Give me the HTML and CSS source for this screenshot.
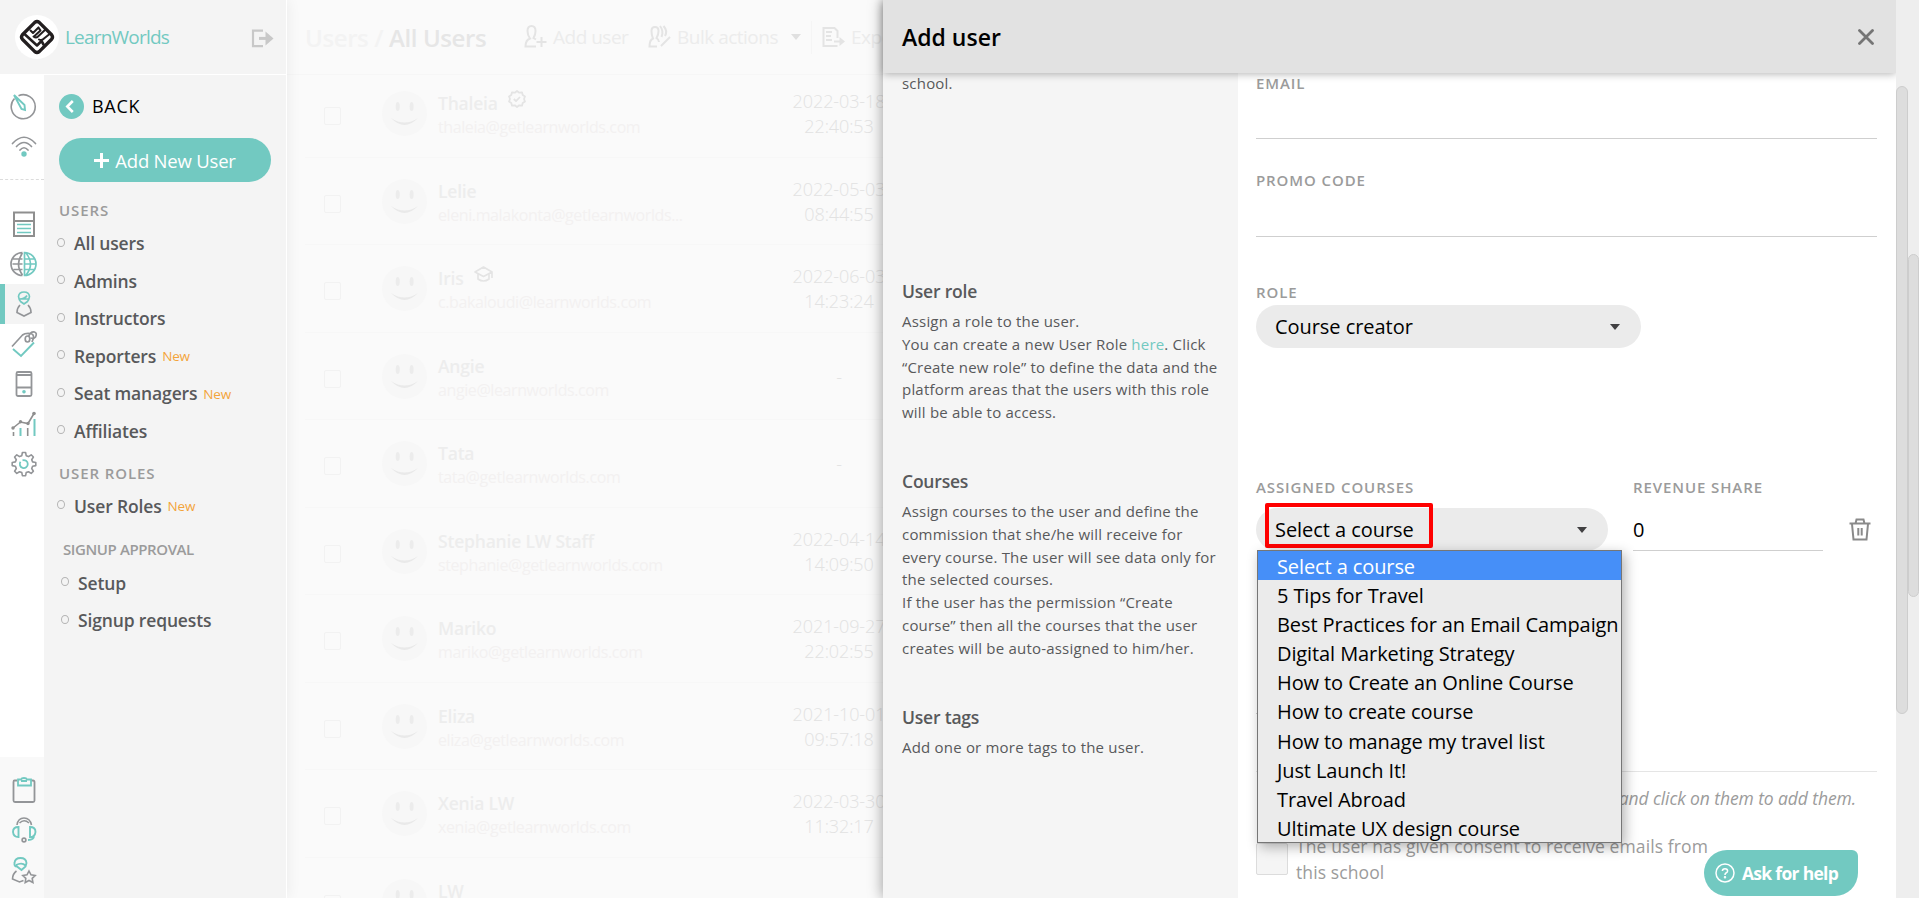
FILE: index.html
```html
<!DOCTYPE html>
<html lang="en">
<head>
    <meta charset="UTF-8">
    <meta name="viewport" content="width=device-width, initial-scale=1.0">
    <title>LearnWorlds - All Users</title>
    <link rel="stylesheet" href="styles.css">
</head>
<body>
    <!-- Shared icons -->
    <svg class="sprite" width="0" height="0">
        <symbol id="face" viewBox="0 0 45 45">
            <circle cx="22.5" cy="22.5" r="22.5" fill="#f7f7f7"/>
            <ellipse cx="15.7" cy="15.5" rx="2" ry="4.6" fill="#ececec"/>
            <ellipse cx="29.6" cy="15.5" rx="2" ry="4.6" fill="#ececec"/>
            <path d="M9 27 Q22.5 41 36 27 Q22.5 36 9 27Z" fill="#e9e9e9"/>
        </symbol>
    </svg>

    <div class="app">
        <aside class="sidebar">
            <div class="brand">
                <span class="logo">
                    <svg width="36" height="36" viewBox="0 0 36 36" fill="none" stroke="#231f20" stroke-width="3.4" stroke-linejoin="round" stroke-linecap="round">
                        <path d="M15.8 3.400 Q18 1.600 20.200 3.400 L32.600 15.800 Q34.400 18 32.600 20.200 L20.200 32.600 Q18 34.400 15.800 32.600 L3.400 20.200 Q1.600 18 3.400 15.800Z"/>
                        <path d="M6 15.500 L18 26.500 L22.500 22 L24.500 25.500" stroke-width="2.600"/>
                        <path d="M11.500 11.500 L14 14 L19.500 8.500 M14.500 17.500 Q17 19.500 19 17.500 L26.500 10.500 M20 20.500 Q22.500 22 25 19.500 L30 15.500 M19.500 8.500 L21.500 11.500 L15.500 17" stroke-width="2"/>
                    </svg>
                </span>
                <span class="brand-name">LearnWorlds</span>
                <svg class="exit" width="23" height="19" viewBox="0 0 23 19" fill="none" stroke="#c8c8c8" stroke-width="2.2">
                    <path d="M12 1.6H2v15.6h10"/>
                    <path d="M8 9.4h9" stroke-width="3"/>
                    <path d="M14.5 2.5 22.5 9.4 14.5 16.5Z" fill="#c8c8c8" stroke="none"/>
                </svg>
            </div>

            <div class="sidebar-body">
                <nav class="rail">
                    <div class="rail-top">
                        <a><svg width="28" height="28" viewBox="0 0 28 28" fill="none" stroke="#939598" stroke-width="1.6">
                            <path d="M4.500 6.500 A12 12 0 1 0 8.500 3.700"/>
                            <path d="M4 3 L14.500 13 L15 18 L11.500 17 L4 3" stroke="#72c9c1" stroke-width="1.900"/>
                        </svg></a>
                        <a><svg width="28" height="28" viewBox="0 0 28 28" fill="none" stroke="#939598" stroke-width="1.7" stroke-linecap="round">
                            <path d="M2.5 11.5 Q14 -1 25.5 11.5 M6.5 14.5 Q14 6.5 21.5 14.5 M10 18 Q14 13.5 18 18"/>
                            <circle cx="14" cy="22" r="2.7" fill="#72c9c1" stroke="none"/>
                        </svg></a>
                    </div>
                    <div class="rail-main">
                        <a><svg width="28" height="28" viewBox="0 0 28 28" fill="none" stroke="#8f8f8f" stroke-width="2">
                            <path d="M4 2.5h20v23.5h-20z M4 11h20"/>
                            <path d="M7 14.5h14 M7 18.5h14 M7 22.5h14" stroke="#72c9c1" stroke-width="1.6"/>
                        </svg></a>
                        <a><svg width="28" height="28" viewBox="0 0 28 28" fill="none" stroke="#939598" stroke-width="1.7">
                            <path d="M12.5 2.5 A11.5 11.5 0 0 0 12.5 25.5 M12.5 3 Q4.5 14 12.5 25 M3 9h9.5 M2.5 14h10 M3.5 19.5h9"/>
                            <path d="M14.5 2.5 A11.5 11.5 0 0 1 14.5 25.5Z M16 3 Q25 14 16 25 M15 9h10 M15 14h11 M15 19.5h10" stroke="#72c9c1"/>
                        </svg></a>
                        <a class="active"><svg width="28" height="28" viewBox="0 0 28 28" fill="none" stroke="#939598" stroke-width="1.7">
                            <path d="M10 15 Q7 18 7 22.5 L14 26 L21 22.5 Q21 18 18 15"/>
                            <path d="M8.5 6.5 Q9 2 14 2 Q19 2 19.5 6.5 Q19 10 17.5 11.5 L14 14 L10.5 11.5 Q9 10 8.5 6.5Z M9.5 9 Q15 9 17 5.5 M11 9h7.5" stroke="#72c9c1"/>
                        </svg></a>
                        <a><svg width="28" height="28" viewBox="0 0 28 28" fill="none" stroke="#939598" stroke-width="1.7">
                            <path d="M2 16.5 L12.5 5 Q15 3 20 3.5 Q24 4 23.5 8 L22 12"/>
                            <ellipse cx="17.5" cy="9" rx="2.3" ry="3"/><path d="M18.5 7 Q20 1.5 24.5 2 Q27.5 3 25.5 7 Q24 9 20.5 8"/>
                            <path d="M3 19 L11 26 L24 12.5" stroke="#72c9c1" stroke-width="1.9"/>
                        </svg></a>
                        <a><svg width="28" height="28" viewBox="0 0 28 28" fill="none" stroke="#939598" stroke-width="1.8">
                            <rect x="6.5" y="2" width="15" height="24" rx="1.5"/><path d="M6.5 5h15 M6.5 17.5h15"/>
                            <circle cx="14" cy="21.7" r="1.8" fill="#72c9c1" stroke="none"/>
                        </svg></a>
                        <a><svg width="28" height="28" viewBox="0 0 28 28" fill="none" stroke="#8f8f8f" stroke-width="1.6">
                            <path d="M3 18 L10.5 12 L18 13.5 L24 3.5 M3.5 22v4 M17.7 18v8"/>
                            <path d="M10.5 18v8 M24.5 9v17" stroke="#72c9c1" stroke-width="2"/>
                            <g fill="#8f8f8f" stroke="none"><circle cx="3" cy="18" r="1.7"/><circle cx="10.5" cy="11.7" r="1.7"/><circle cx="18" cy="13.5" r="1.7"/><circle cx="24" cy="3.5" r="1.8"/></g>
                        </svg></a>
                        <a><svg width="28" height="28" viewBox="0 0 28 28" fill="none" stroke="#939598" stroke-width="1.6" stroke-linejoin="round">
                            <path d="M12.4 2.500h3.200l.6 3.200 2.300.9 2.700-1.800 2.200 2.200-1.700 2.700.9 2.200 3.200.6v3.100l-3.200.6-.9 2.300 1.700 2.700-2.200 2.200-2.700-1.700-2.300.9-.6 3.100h-3.200l-.6-3.100-2.300-.9-2.700 1.700-2.200-2.200 1.700-2.700-.9-2.300-3.200-.6v-3.100l3.200-.6.9-2.200-1.700-2.700 2.200-2.200 2.700 1.800 2.300-.9z"/>
                            <path d="M10.5 11.8 A4 4 0 1 0 12.5 10.3" stroke="#72c9c1" stroke-width="1.8"/>
                        </svg></a>
                    </div>
                    <div class="rail-bottom">
                        <a><svg width="28" height="28" viewBox="0 0 28 28" fill="none" stroke="#939598" stroke-width="1.8">
                            <path d="M7 4.5H4.5Q3.5 4.5 3.5 6v18.5Q3.5 26 5 26h18q1.500 0 1.500-1.500V6q0-1.500-1.500-1.500h-2"/>
                            <path d="M8 3.500h3q.5-1.500 3-1.500t3 1.500h4v6h-13z M11 5h6" stroke="#72c9c1"/>
                        </svg></a>
                        <a><svg width="28" height="28" viewBox="0 0 28 28" fill="none" stroke="#939598" stroke-width="1.6">
                            <path d="M7 9 Q8 2 14 2 Q20 2 21.5 9 M9.5 7 Q14 2.5 19 7"/><circle cx="14" cy="24" r="1.9"/>
                            <path d="M8.5 11 Q3 11 3 16 Q3.5 21 8.5 21Z M20 11 Q25.5 11 25.5 16 Q25 21 20 21Z M24 19.5 Q24 24 18 24" stroke="#72c9c1" stroke-width="1.9"/>
                        </svg></a>
                        <a><svg width="28" height="28" viewBox="0 0 28 28" fill="none" stroke="#939598" stroke-width="1.6">
                            <path d="M6.5 15 Q2.5 18 2.5 23 L9.5 26 L13.5 24.5"/><path d="M19 15l2 3.800 4.200.7-3 2.900.7 4.100-3.900-2-3.800 2 .6-4.100-3-2.900 4.200-.7z"/>
                            <path d="M4.5 7 Q5 2 10.5 2 Q16 2 16.5 7 L15.5 10.5 L11.5 14 L7 10.5 Q4 10.5 4.5 7Z M6 9 Q12 6 15.5 9.5" stroke="#72c9c1" stroke-width="1.9"/>
                        </svg></a>
                    </div>
                </nav>

                <div class="menu-panel">
                    <a class="back">
                        <span class="back-icon"><svg width="25" height="25" viewBox="0 0 25 25" fill="none" stroke="#fff" stroke-width="2.6"><path d="M13.8 7 8.3 12.5 13.8 18"/></svg></span>
                        BACK
                    </a>
                    <a class="add-btn">
                        <svg width="15" height="15" viewBox="0 0 15 15" stroke="#fff" stroke-width="3"><path d="M7.5 0v15M0 7.5h15"/></svg>
                        <span>Add New User</span>
                    </a>
                    <h4>USERS</h4>
                    <ul>
                        <li>All users</li>
                        <li>Admins</li>
                        <li>Instructors</li>
                        <li>Reporters <em>New</em></li>
                        <li>Seat managers <em>New</em></li>
                        <li>Affiliates</li>
                    </ul>
                    <h4>USER ROLES</h4>
                    <ul>
                        <li>User Roles <em>New</em></li>
                    </ul>
                    <div class="signup">
                        <h4>SIGNUP APPROVAL</h4>
                        <ul>
                            <li>Setup</li>
                            <li>Signup requests</li>
                        </ul>
                    </div>
                </div>
            </div>
        </aside>

        <main class="content">
            <header class="toolbar">
                <div class="crumbs"><span>Users /</span> All Users</div>
                <a class="tool tool-add">
                    <svg width="23" height="26" viewBox="0 0 23 26" fill="none" stroke="#e4e4e4" stroke-width="2"><path d="M12 22.5H1.5Q1.5 16 6 14.5 Q3.5 11 3.5 7 Q3.5 2 7.5 2 Q11.5 2 11.5 7 Q11.5 11 9.5 14 L12 15.5 M17.5 13v10 M12.5 18h10"/></svg>
                    <span>Add user</span>
                </a>
                <a class="tool tool-bulk">
                    <svg width="23" height="26" viewBox="0 0 23 26" fill="none" stroke="#e4e4e4" stroke-width="2"><path d="M9 22.5H1.5Q1.5 16 5 14.5 Q3.5 11 3.5 7 Q3.5 3 7 3 Q10.5 3 10.5 7 Q10.5 11 8.5 14 Q11 15.5 11 18 M12 2 Q16 7 13.5 13 M15.5 2 Q20 7 17 12 M13 22 L22 13"/></svg>
                    <span>Bulk actions</span>
                    <i class="caret"></i>
                </a>
                <a class="tool tool-export">
                    <svg width="23" height="22" viewBox="0 0 23 22" fill="none" stroke="#e4e4e4" stroke-width="2"><path d="M15.5 12V5l-3-3H1.5v18h14 M4 6h6 M4 10h5 M4 14h6 M12 15.5h7"/><path d="M17.5 11 23 15.5 17.5 20Z" fill="#e4e4e4" stroke="none"/></svg>
                    <span>Export</span>
                </a>
            </header>

            <div class="user-list">
                <div class="user-row">
                    <i class="check"></i>
                    <svg class="avatar"><use href="#face"/></svg>
                    <div class="who"><b>Thaleia <svg width="18" height="18" viewBox="0 0 18 18" fill="none" stroke="#e4e4e4" stroke-width="1.8" stroke-linejoin="round"><path d="M9 1l2.200 1.700 2.800-.4.700 2.700 2.300 1.500L16 9l1 2.500-2.300 1.500-.7 2.700-2.800-.4L9 17l-2.200-1.700-2.800.4-.7-2.700L1 11.500 2 9 1 6.500 3.300 5 4 2.300l2.800.4z M5.800 9l2.200 2.200 4-4.200"/></svg></b><p>thaleia@getlearnworlds.com</p></div>
                    <div class="when">2022-03-18 22:40:53</div>
                </div>
                <div class="user-row">
                    <i class="check"></i>
                    <svg class="avatar"><use href="#face"/></svg>
                    <div class="who"><b>Lelie</b><p>eleni.malakonta@getlearnworlds...</p></div>
                    <div class="when">2022-05-03 08:44:55</div>
                </div>
                <div class="user-row">
                    <i class="check"></i>
                    <svg class="avatar"><use href="#face"/></svg>
                    <div class="who"><b>Iris <svg width="19" height="18" viewBox="0 0 19 18" fill="none" stroke="#e4e4e4" stroke-width="1.7" stroke-linejoin="round"><path d="M9.5 2l8.500 5-8.500 4.500L1 7z M4 9v5q5.500 4 11 0V9 M18 7v6"/></svg></b><p>c.bakaloudi@learnworlds.com</p></div>
                    <div class="when">2022-06-03 14:23:24</div>
                </div>
                <div class="user-row">
                    <i class="check"></i>
                    <svg class="avatar"><use href="#face"/></svg>
                    <div class="who"><b>Angie</b><p>angie@learnworlds.com</p></div>
                    <div class="when none">-</div>
                </div>
                <div class="user-row">
                    <i class="check"></i>
                    <svg class="avatar"><use href="#face"/></svg>
                    <div class="who"><b>Tata</b><p>tata@getlearnworlds.com</p></div>
                    <div class="when none">-</div>
                </div>
                <div class="user-row">
                    <i class="check"></i>
                    <svg class="avatar"><use href="#face"/></svg>
                    <div class="who"><b>Stephanie LW Staff</b><p>stephanie@getlearnworlds.com</p></div>
                    <div class="when">2022-04-14 14:09:50</div>
                </div>
                <div class="user-row">
                    <i class="check"></i>
                    <svg class="avatar"><use href="#face"/></svg>
                    <div class="who"><b>Mariko</b><p>mariko@getlearnworlds.com</p></div>
                    <div class="when">2021-09-27 22:02:55</div>
                </div>
                <div class="user-row">
                    <i class="check"></i>
                    <svg class="avatar"><use href="#face"/></svg>
                    <div class="who"><b>Eliza</b><p>eliza@getlearnworlds.com</p></div>
                    <div class="when">2021-10-01 09:57:18</div>
                </div>
                <div class="user-row">
                    <i class="check"></i>
                    <svg class="avatar"><use href="#face"/></svg>
                    <div class="who"><b>Xenia LW</b><p>xenia@getlearnworlds.com</p></div>
                    <div class="when">2022-03-30 11:32:17</div>
                </div>
                <div class="user-row">
                    <i class="check"></i>
                    <svg class="avatar"><use href="#face"/></svg>
                    <div class="who"><b>LW</b></div>
                </div>
            </div>
        </main>

        <section class="drawer">
            <header class="drawer-header">
                <h2>Add user</h2>
                <svg width="16" height="16" viewBox="0 0 16 16" stroke="#757575" stroke-width="2.8" stroke-linecap="round"><path d="M1.5 1.5l13 13M14.5 1.5l-13 13"/></svg>
            </header>

            <div class="form">
                <div class="info info-user"><p>school.</p></div>
                <div class="fields fields-user">
                    <div class="field"><label>EMAIL</label></div>
                    <div class="field"><label>PROMO CODE</label></div>
                </div>

                <div class="info">
                    <h3>User role</h3>
                    <p>Assign a role to the user.<br>You can create a new User Role <a>here</a>. Click<br>“Create new role” to define the data and the<br>platform areas that the users with this role<br>will be able to access.</p>
                </div>
                <div class="fields fields-role">
                    <label>ROLE</label>
                    <div class="select select-role"><span>Course creator</span><i class="caret"></i></div>
                </div>

                <div class="info">
                    <h3>Courses</h3>
                    <p>Assign courses to the user and define the<br>commission that she/he will receive for<br>every course. The user will see data only for<br>the selected courses.<br>If the user has the permission “Create<br>course” then all the courses that the user<br>creates will be auto-assigned to him/her.</p>
                </div>
                <div class="fields fields-courses">
                    <div class="course-col">
                        <label>ASSIGNED COURSES</label>
                        <div class="select">
                            <span>Select a course</span><i class="caret"></i>
                            <div class="marker"></div>
                            <ul class="options">
                                <li class="selected">Select a course</li>
                                <li>5 Tips for Travel</li>
                                <li>Best Practices for an Email Campaign</li>
                                <li>Digital Marketing Strategy</li>
                                <li>How to Create an Online Course</li>
                                <li>How to create course</li>
                                <li>How to manage my travel list</li>
                                <li>Just Launch It!</li>
                                <li>Travel Abroad</li>
                                <li>Ultimate UX design course</li>
                            </ul>
                        </div>
                    </div>
                    <div class="share-col">
                        <label>REVENUE SHARE</label>
                        <div class="share">0</div>
                    </div>
                    <svg class="trash" width="22" height="23" viewBox="0 0 22 23" fill="none" stroke="#8a8a8a" stroke-width="2"><path d="M.5 5.500h21 M6.500 5.500l1-4h7l1 4 M3 6l1.500 15.500h13L19 6"/><path d="M9.300 10v7.500M12.700 10v7.500" stroke-width="2"/></svg>
                </div>

                <div class="info">
                    <h3>User tags</h3>
                    <p>Add one or more tags to the user.</p>
                </div>
                <div class="fields fields-tags">
                    <div class="tag-line"></div>
                    <p class="hint">and click on them to add them.</p>
                    <div class="consent">
                        <i class="box"></i>
                        <span>The user has given consent to receive emails from<br>this school</span>
                    </div>
                </div>
            </div>
        </section>

        <div class="scrollbar inner"><i></i></div>
        <div class="scrollbar outer"><i></i></div>

        <a class="help">
            <svg width="20" height="20" viewBox="0 0 20 20" fill="none" stroke="#fff" stroke-width="1.5"><circle cx="10" cy="10" r="9"/><path d="M7.4 8Q7.4 5.7 10 5.7T12.6 8Q12.6 9.3 11 10Q10 10.5 10 12" /><circle cx="10" cy="14.2" r=".5"/></svg>
            <span>Ask for help</span>
        </a>
    </div>
</body>
</html>
```

FILE: styles.css
```css
* {
    box-sizing: border-box;
}

body {
    margin: 0;
    font-family: "Open Sans", "Noto Sans", sans-serif;
    font-size: 16px;
    color: #58595b;
    background: #fafafa;
}

h2, h3, h4, p, ul {
    margin: 0;
    padding: 0;
}

ul {
    list-style: none;
}

svg {
    display: block;
    flex: none;
}

.sprite {
    position: absolute;
}

.app {
    display: flex;
    height: 898px;
    overflow: hidden;
    position: relative;
}

/* Sidebar */
.sidebar {
    width: 287px;
    flex: none;
    display: flex;
    flex-direction: column;
    background: #f4f4f4;
    border-right: 1px solid #fff;
    box-shadow: 0 0 14px rgba(0, 0, 0, 0.07);
    z-index: 2;
}

.brand {
    height: 75px;
    flex: none;
    display: flex;
    align-items: center;
    padding: 0 12px 0 15px;
    border-bottom: 1px solid #fff;
}

.logo {
    width: 44px;
    height: 44px;
    border-radius: 50%;
    background: #fff;
    display: flex;
    align-items: center;
    justify-content: center;
}

.brand-name {
    margin-left: 6px;
    font-size: 19px;
    letter-spacing: -0.8px;
    color: #72c9c1;
}

.exit {
    margin-left: auto;
    margin-top: 3px;
}

.sidebar-body {
    flex: 1;
    display: flex;
}

.rail {
    width: 44px;
    background: #fff;
    display: flex;
    flex-direction: column;
}

.rail a {
    height: 40px;
    display: flex;
    align-items: center;
    padding-left: 10px;
}

.rail-top {
    padding: 11px 0 13px;
    border-bottom: 1px dashed #dcdcdc;
}

.rail-main {
    padding-top: 24px;
}

.rail a.active {
    background: #f4f4f4;
    border-left: 5px solid #72c9c1;
    padding-left: 5px;
}

.rail-bottom {
    margin-top: auto;
    height: 141px;
    padding-top: 13px;
    background: #f9f9f9;
}

.menu-panel {
    flex: 1;
    padding: 18px 15px 0;
}

.back {
    display: flex;
    align-items: center;
    font-size: 18px;
    letter-spacing: 0.7px;
    line-height: 26px;
    color: #000;
}

.back-icon {
    width: 25px;
    height: 25px;
    margin-right: 8px;
    border-radius: 50%;
    background: #72c9c1;
}

.add-btn {
    height: 44px;
    margin: 19px 0 16px;
    border-radius: 22px;
    background: #72c9c1;
    color: #fff;
    display: flex;
    align-items: center;
    justify-content: center;
    gap: 6px;
    font-size: 18.5px;
    letter-spacing: -0.2px;
}

.menu-panel h4 {
    font-size: 15px;
    font-weight: 600;
    line-height: 24px;
    letter-spacing: 0.9px;
    margin-bottom: 2.5px;
    color: #9b9b9b;
}

.menu-panel li {
    display: flex;
    align-items: center;
    height: 37.5px;
    font-size: 17.5px;
    font-weight: 600;
    letter-spacing: -0.15px;
}

.menu-panel li::before {
    content: "";
    width: 6px;
    height: 7px;
    margin: 0 9px 2px -2px;
    border: 1px solid #b5b5b5;
    border-radius: 50%;
}

.menu-panel li em {
    margin: 1px 0 0 6px;
    font-size: 13.5px;
    font-style: normal;
    font-weight: 400;
    color: #f3a43b;
}

.menu-panel ul {
    margin-bottom: 11px;
}

.signup {
    padding: 1px 0 0 4px;
}

.menu-panel .signup h4 {
    letter-spacing: -0.4px;
    margin-bottom: 3.5px;
}

/* Users list, faded while the drawer is open */
.content {
    width: 596px;
    flex: none;
    overflow: hidden;
}

.toolbar {
    height: 75px;
    display: flex;
    align-items: center;
    padding-left: 18px;
    border-bottom: 1px solid #f6f6f6;
    background: #fafafa;
    white-space: nowrap;
    position: relative;
    z-index: 1;
}

.crumbs {
    width: 219px;
    flex: none;
    font-size: 24px;
    font-weight: 600;
    letter-spacing: -0.4px;
    color: #e6e6e6;
}

.crumbs span {
    color: #f3f3f3;
}

.tool {
    display: flex;
    flex: none;
    align-items: center;
    gap: 6px;
    font-size: 19px;
    color: #ececec;
    letter-spacing: -0.5px;
}

.tool-add {
    width: 124px;
}

.tool-bulk {
    width: 164px;
    height: 33px;
    border-right: 1px solid #f5f5f5;
    margin-right: 10px;
}

.caret {
    width: 0;
    height: 0;
    flex: none;
    border: 5px solid transparent;
    border-top: 6px solid #414042;
    border-bottom: 0;
}

.tool-bulk .caret {
    margin-left: 7px;
    border-top-color: #e0e0e0;
}

.user-list {
    margin: -5px 0 0 18px;
}

.user-row {
    height: 87.5px;
    display: flex;
    align-items: flex-start;
    border-bottom: 1px solid #f7f7f7;
}

.check {
    width: 17px;
    height: 18px;
    flex: none;
    margin: 37px 41px 0 19px;
    border: 1px solid #f2f2f2;
    border-radius: 2px;
}

.avatar {
    width: 45px;
    height: 45px;
    margin: 21px 11px 0 0;
}

.who {
    width: 337px;
    flex: none;
    padding-top: 20px;
}

.who b {
    display: flex;
    gap: 10px;
    font-size: 17.5px;
    font-weight: 600;
    line-height: 26px;
    letter-spacing: -0.2px;
    color: #ededed;
}

.who p {
    font-size: 16px;
    font-weight: 400;
    line-height: 23px;
    letter-spacing: -0.4px;
    color: #f3f1f1;
}

.when {
    width: 128px;
    flex: none;
    padding: 19px 14px 0;
    text-align: center;
    font-size: 18px;
    font-weight: 300;
    line-height: 25px;
    letter-spacing: -0.1px;
    color: #e2e2e2;
}

.when.none {
    padding-top: 32px;
}

/* Drawer */
.drawer {
    width: 1013px;
    flex: none;
    background: #fff;
    box-shadow: 0 0 14px rgba(0, 0, 0, 0.4);
    z-index: 3;
}

.drawer-header {
    height: 73px;
    padding: 0 22px 0 19px;
    display: flex;
    align-items: center;
    justify-content: space-between;
    background: #e2e2e2;
    box-shadow: 0 1px 8px rgba(0, 0, 0, 0.3);
    position: relative;
    z-index: 1;
}

.drawer-header h2 {
    font-size: 23px;
    font-weight: 600;
    letter-spacing: 0;
    color: #000;
}

.form {
    display: grid;
    grid-template-columns: 355px 658px;
    grid-template-rows: 206px 190px 236px 193px;
}

.info {
    padding-left: 19px;
    background: #f5f5f5;
    white-space: nowrap;
}

.info h3 {
    font-size: 17.5px;
    font-weight: 600;
    line-height: 24px;
    letter-spacing: -0.2px;
    margin-bottom: 7px;
}

.info p {
    font-size: 15px;
    line-height: 22.8px;
    letter-spacing: 0.2px;
}

.info a {
    color: #72c9c1;
}

.info-user p {
    margin-top: -1px;
}

.fields {
    padding: 0 19px 0 18px;
}

label {
    display: block;
    font-size: 15px;
    font-weight: 600;
    line-height: 22px;
    letter-spacing: 0.9px;
    color: #9b9b9b;
}

.field {
    height: 67px;
    margin-top: -1px;
    border-bottom: 1px solid #cfcfcf;
}

.field + .field {
    height: 68px;
    margin-top: 30px;
}

.fields-role {
    padding-top: 2px;
}

.select {
    height: 43px;
    display: flex;
    align-items: center;
    justify-content: space-between;
    padding: 0 21px 0 19px;
    border-radius: 22px;
    background: #ebebeb;
    color: #000;
    font-size: 20px;
    letter-spacing: -0.05px;
    position: relative;
}

.select-role {
    width: 385px;
    margin-top: 2px;
}

.fields-courses {
    display: flex;
    padding-top: 7px;
}

.course-col {
    width: 352px;
    margin-right: 25px;
}

.course-col .select {
    margin-top: 10px;
}

.marker {
    position: absolute;
    left: 9px;
    top: -5px;
    width: 168px;
    height: 45px;
    border: 4px solid #f00;
    border-radius: 2px;
}

.options {
    position: absolute;
    left: 1px;
    top: 42px;
    width: 365px;
    height: 293px;
    border: 1px solid #767676;
    background: #ebebeb;
    box-shadow: 3px 4px 12px rgba(0, 0, 0, 0.3);
    white-space: nowrap;
    z-index: 5;
}

.options li {
    height: 29.1px;
    line-height: 31px;
    padding-left: 19px;
    letter-spacing: -0.1px;
}

.options .selected {
    background: #468ff8;
    color: #fff;
}

.share-col {
    width: 190px;
}

.share {
    height: 43px;
    margin-top: 10px;
    border-bottom: 1px solid #cfcfcf;
    line-height: 43px;
    font-size: 20px;
    color: #000;
}

.trash {
    margin: 42px 0 0 26px;
}

.fields-tags {
    padding-top: 8px;
}

.tag-line {
    height: 59px;
    border-bottom: 1px solid #e5e5e5;
}

.tag-line::before {
    content: "";
    display: block;
    width: 300px;
    border-top: 1px solid #cfcfcf;
}

.hint {
    margin: 13px 21px 0 0;
    text-align: right;
    font-size: 17.5px;
    font-style: italic;
    line-height: 26px;
    letter-spacing: -0.1px;
    color: #9b9b9b;
}

.consent {
    display: flex;
    gap: 8px;
    margin-top: 22px;
    font-size: 17.5px;
    line-height: 26px;
    letter-spacing: 0.1px;
    color: #9b9b9b;
}

.box {
    width: 32px;
    height: 32px;
    margin-top: 10px;
    border: 1px solid #dcdcdc;
    border-radius: 2px;
    background: #f5f5f5;
}

/* Scrollbars */
.scrollbar {
    width: 12px;
    flex: none;
    background: #eeeeee;
    z-index: 4;
}

.scrollbar.outer {
    width: 11px;
}

.scrollbar i {
    display: block;
    height: 628px;
    margin-top: 86px;
    border: 1px solid #cdcdcd;
    border-radius: 6px;
    background: #dddddd;
}

.scrollbar.outer i {
    height: 343px;
    margin-top: 254px;
}

.help {
    position: absolute;
    left: 1704px;
    top: 850px;
    width: 154px;
    height: 46px;
    padding-left: 11px;
    display: flex;
    align-items: center;
    gap: 7px;
    border-radius: 23px 6px 23px 23px;
    background: #72c9c1;
    color: #fff;
    font-size: 17.5px;
    font-weight: 700;
    letter-spacing: -0.7px;
    white-space: nowrap;
    z-index: 6;
}
```
